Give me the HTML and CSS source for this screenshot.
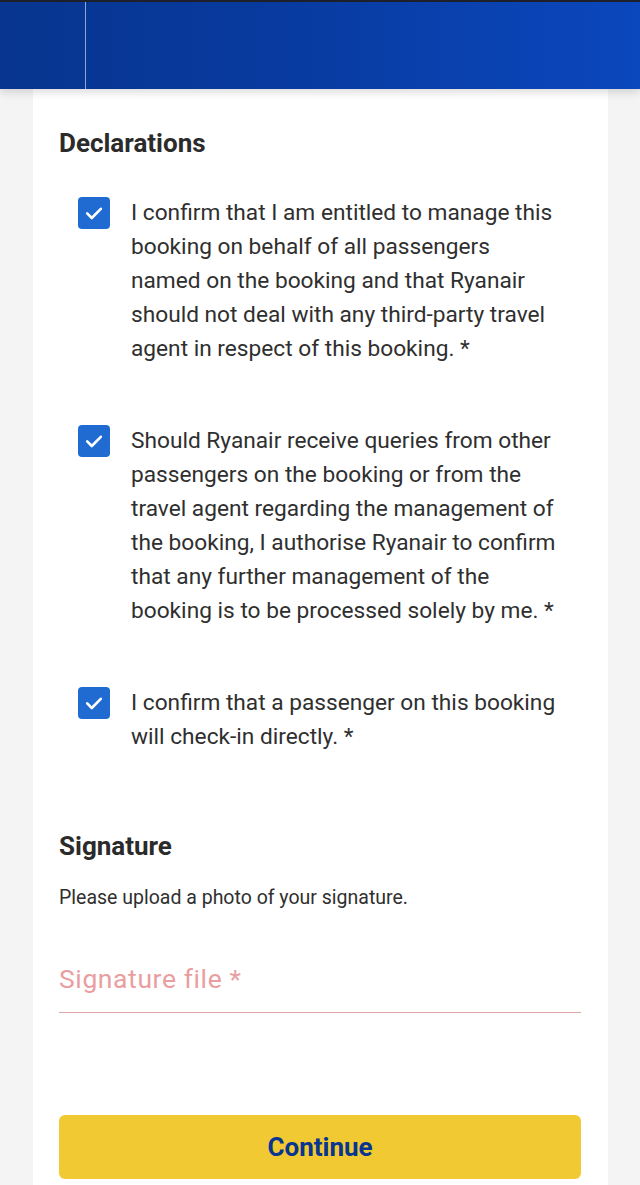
FILE: index.html
```html
<!DOCTYPE html>
<html lang="en">
<head>
<meta charset="utf-8">
<link rel="stylesheet" href="styles.css">
</head>
<body>
<header class="topbar">
  <div class="topbar-divider"></div>
</header>
<main class="page">
  <section class="card">
    <h2 class="section-title">Declarations</h2>
    <div class="decl-list">
      <label class="decl">
        <span class="checkbox"><svg viewBox="0 0 24 24" width="24" height="24"><path d="M5.2 12.4l4.6 4.6 9-9.2" fill="none" stroke="#fff" stroke-width="2.6" stroke-linecap="round" stroke-linejoin="round"/></svg></span>
        <span class="decl-text">I confirm that I am entitled to manage this booking on behalf of all passengers named on the booking and that Ryanair should not deal with any third-party travel agent in respect of this booking. *</span>
      </label>
      <label class="decl">
        <span class="checkbox"><svg viewBox="0 0 24 24" width="24" height="24"><path d="M5.2 12.4l4.6 4.6 9-9.2" fill="none" stroke="#fff" stroke-width="2.6" stroke-linecap="round" stroke-linejoin="round"/></svg></span>
        <span class="decl-text">Should Ryanair receive queries from other passengers on the booking or from the travel agent regarding the management of the booking, I authorise Ryanair to confirm that any further management of the booking is to be processed solely by me. *</span>
      </label>
      <label class="decl">
        <span class="checkbox"><svg viewBox="0 0 24 24" width="24" height="24"><path d="M5.2 12.4l4.6 4.6 9-9.2" fill="none" stroke="#fff" stroke-width="2.6" stroke-linecap="round" stroke-linejoin="round"/></svg></span>
        <span class="decl-text">I confirm that a passenger on this booking will check-in directly. *</span>
      </label>
    </div>
    <h2 class="section-title sig-title">Signature</h2>
    <p class="hint">Please upload a photo of your signature.</p>
    <div class="file-field">
      <span class="file-label">Signature file *</span>
    </div>
    <button class="continue">Continue</button>
  </section>
</main>
</body>
</html>
```
FILE: styles.css
```css
* { box-sizing: border-box; }
html, body { margin: 0; padding: 0; }
body {
  background: #f4f4f4;
  font-family: Roboto, "Liberation Sans", sans-serif;
  color: #2d2d2d;
  width: 640px;
  height: 1185px;
  overflow: hidden;
}
.topbar {
  height: 89px;
  background: linear-gradient(90deg, #07358f 0%, #083a9e 40%, #0b47bd 100%);
  border-top: 2px solid #1d1f2a;
  position: relative;
  box-shadow: 0 2px 10px rgba(0,0,0,0.18);
  z-index: 2;
}
.topbar-divider {
  position: absolute;
  left: 85px;
  top: 0;
  bottom: 0;
  width: 1px;
  background: rgba(200, 215, 240, 0.7);
}
.page {
  padding: 0 32px 0 33px;
}
.card {
  background: #fff;
  padding: 38px 27px 40px 26px;
  min-height: 1100px;
}
.section-title {
  margin: 0;
  font-size: 26px;
  font-weight: 700;
  line-height: 32px;
  color: #2b2b2b;
}
.decl-list {
  display: flex;
  flex-direction: column;
  gap: 58px;
  margin-top: 37px;
  padding-left: 19px;
}
.decl {
  display: flex;
  gap: 21px;
  align-items: flex-start;
}
.checkbox {
  flex: none;
  width: 32px;
  height: 32px;
  border-radius: 4px;
  background: #1f6bd1;
  display: flex;
  align-items: center;
  justify-content: center;
  margin-top: 1px;
}
.decl-text {
  max-width: 428px;
  font-size: 22.7px;
  line-height: 34px;
  color: #2f2f2f;
}
.sig-title {
  margin-top: 76px;
}
.hint {
  margin: 23px 0 0;
  font-size: 19.5px;
  line-height: 26px;
  color: #2f2f2f;
}
.file-field {
  margin-top: 51px;
  border-bottom: 1.5px solid #e2a3a3;
  padding-bottom: 16px;
}
.file-label {
  display: block;
  font-size: 26.5px;
  line-height: 34px;
  color: #e99e9f;
  letter-spacing: 0.6px;
}
.continue {
  display: block;
  width: 100%;
  margin-top: 102px;
  height: 64px;
  border: none;
  border-radius: 6px;
  background: #f1c932;
  color: #073590;
  font-family: Roboto, "Liberation Sans", sans-serif;
  font-size: 26px;
  font-weight: 700;
}
```
